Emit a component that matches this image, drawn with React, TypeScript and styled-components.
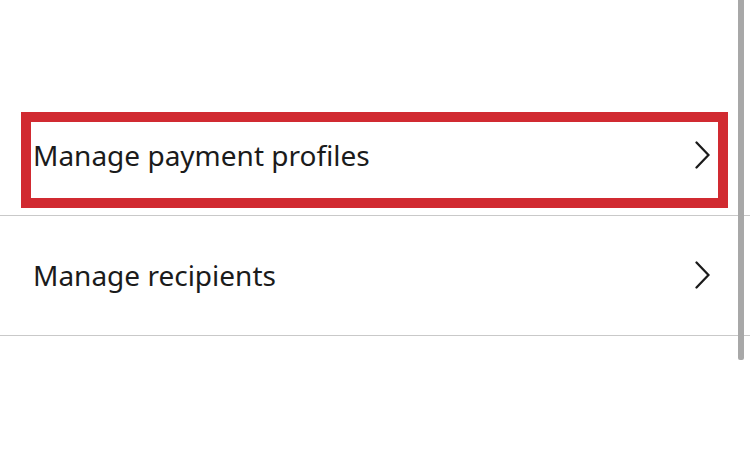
import React from "react";
import styled, { createGlobalStyle } from "styled-components";

const Global = createGlobalStyle`
  html, body { margin: 0; padding: 0; background: #ffffff; }
  body { font-family: "Noto Sans", "Open Sans", sans-serif; overflow: hidden; }
`;

const Page = styled.div`
  position: relative;
  width: 750px;
  height: 466px;
  background: #ffffff;
  padding-top: 96px;
  box-sizing: border-box;
`;

const List = styled.ul`
  list-style: none;
  margin: 0;
  padding: 0;
`;

const Row = styled.li<{ $focused?: boolean }>`
  position: relative;
  display: flex;
  align-items: center;
  justify-content: space-between;
  height: 120px;
  padding: 0 40px 2px 33px;
  box-sizing: border-box;
  border-bottom: 1px solid #c9c9c9;
  ${(p) =>
    p.$focused &&
    `
    &::after {
      content: "";
      position: absolute;
      left: 21px;
      top: 16px;
      width: 707px;
      height: 96px;
      box-sizing: border-box;
      border: 10px solid #d12a31;
      pointer-events: none;
    }
  `}
`;

const Label = styled.span`
  font-size: 28px;
  color: #1b1b1b;
`;

const Chevron = styled.svg`
  width: 15px;
  height: 28px;
  flex: none;
`;

const ScrollThumb = styled.div`
  position: absolute;
  left: 738px;
  top: 0;
  width: 6px;
  height: 360px;
  background: #a8a8a8;
  border-radius: 0 0 2px 2px;
`;

const ChevronIcon = () => (
  <Chevron viewBox="0 0 15 28">
    <polyline
      points="1.5,1.5 13.5,14 1.5,26.5"
      fill="none"
      stroke="#1b1b1b"
      strokeWidth="2.3"
      strokeLinecap="round"
      strokeLinejoin="miter"
    />
  </Chevron>
);

export default function App() {
  const items = [
    { label: "Manage payment profiles", focused: true },
    { label: "Manage recipients", focused: false },
  ];
  return (
    <>
      <Global />
      <Page>
        <List>
          {items.map((it) => (
            <Row key={it.label} $focused={it.focused}>
              <Label>{it.label}</Label>
              <ChevronIcon />
            </Row>
          ))}
        </List>
        <ScrollThumb />
      </Page>
    </>
  );
}
